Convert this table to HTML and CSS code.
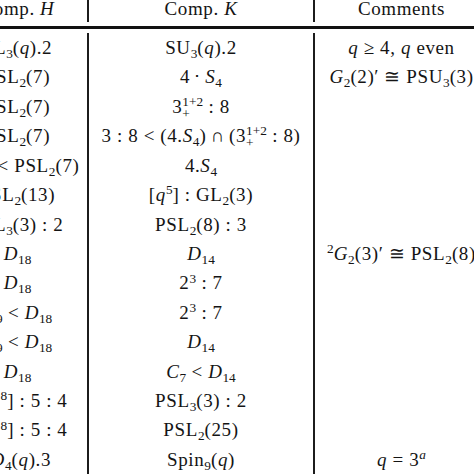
FILE: index.html
```html
<!DOCTYPE html>
<html>
<head>
<meta charset="utf-8">
<link rel="stylesheet" href="styles.css">
</head>
<body>
<div class="table">
  <div class="row head">
    <div class="cell">Comp. <span class="v">H</span></div>
    <div class="cell mid">Comp. <span class="v">K</span></div>
    <div class="cell">Comments</div>
  </div>
  <div class="rule"></div>
  <div class="body">
    <div class="row">
      <div class="cell">SL<span class="sb">3</span>(<span class="v">q</span>).2</div>
      <div class="cell mid">SU<span class="sb">3</span>(<span class="v">q</span>).2</div>
      <div class="cell"><span class="v">q</span><span class="rel">≥</span>4, <span class="v">q</span> even</div>
    </div>
    <div class="row">
      <div class="cell">PSL<span class="sb">2</span>(7)</div>
      <div class="cell mid">4<span class="bin">⋅</span><span class="v">S</span><span class="sb">4</span></div>
      <div class="cell"><span class="v">G</span><span class="sb">2</span>(2)′<span class="rel">≅</span>PSU<span class="sb">3</span>(3)</div>
    </div>
    <div class="row">
      <div class="cell">PSL<span class="sb">2</span>(7)</div>
      <div class="cell mid">3<span class="ss"><span class="ln">1+2</span><span class="ln">+</span></span><span class="rel">:</span>8</div>
      <div class="cell"></div>
    </div>
    <div class="row">
      <div class="cell">PSL<span class="sb">2</span>(7)</div>
      <div class="cell mid">3<span class="rel">:</span>8<span class="rel">&lt;</span>(4.<span class="v">S</span><span class="sb">4</span>)<span class="bin">∩</span>(3<span class="ss"><span class="ln">1+2</span><span class="ln">+</span></span><span class="rel">:</span>8)</div>
      <div class="cell"></div>
    </div>
    <div class="row">
      <div class="cell">7<span class="rel">:</span>3<span class="rel">&lt;</span>PSL<span class="sb">2</span>(7)</div>
      <div class="cell mid">4.<span class="v">S</span><span class="sb">4</span></div>
      <div class="cell"></div>
    </div>
    <div class="row">
      <div class="cell">PSL<span class="sb">2</span>(13)</div>
      <div class="cell mid">[<span class="v">q</span><span class="sp">5</span>]<span class="rel">:</span>GL<span class="sb">2</span>(3)</div>
      <div class="cell"></div>
    </div>
    <div class="row">
      <div class="cell">PSL<span class="sb">3</span>(3)<span class="rel">:</span>2</div>
      <div class="cell mid">PSL<span class="sb">2</span>(8)<span class="rel">:</span>3</div>
      <div class="cell"></div>
    </div>
    <div class="row">
      <div class="cell"><span class="v">D</span><span class="sb">18</span></div>
      <div class="cell mid"><span class="v">D</span><span class="sb">14</span></div>
      <div class="cell"><span class="sp">2</span><span class="v">G</span><span class="sb">2</span>(3)′<span class="rel">≅</span>PSL<span class="sb">2</span>(8)</div>
    </div>
    <div class="row">
      <div class="cell"><span class="v">D</span><span class="sb">18</span></div>
      <div class="cell mid">2<span class="sp">3</span><span class="rel">:</span>7</div>
      <div class="cell"></div>
    </div>
    <div class="row">
      <div class="cell"><span class="v">C</span><span class="sb">9</span><span class="rel">&lt;</span><span class="v">D</span><span class="sb">18</span></div>
      <div class="cell mid">2<span class="sp">3</span><span class="rel">:</span>7</div>
      <div class="cell"></div>
    </div>
    <div class="row">
      <div class="cell"><span class="v">C</span><span class="sb">9</span><span class="rel">&lt;</span><span class="v">D</span><span class="sb">18</span></div>
      <div class="cell mid"><span class="v">D</span><span class="sb">14</span></div>
      <div class="cell"></div>
    </div>
    <div class="row">
      <div class="cell"><span class="v">D</span><span class="sb">18</span></div>
      <div class="cell mid"><span class="v">C</span><span class="sb">7</span><span class="rel">&lt;</span><span class="v">D</span><span class="sb">14</span></div>
      <div class="cell"></div>
    </div>
    <div class="row">
      <div class="cell"><span class="wide">[5<span class="sp">8</span>]<span class="rel">:</span>5<span class="rel">:</span>4</span></div>
      <div class="cell mid">PSL<span class="sb">3</span>(3)<span class="rel">:</span>2</div>
      <div class="cell"></div>
    </div>
    <div class="row">
      <div class="cell"><span class="wide">[5<span class="sp">8</span>]<span class="rel">:</span>5<span class="rel">:</span>4</span></div>
      <div class="cell mid">PSL<span class="sb">2</span>(25)</div>
      <div class="cell"></div>
    </div>
    <div class="row">
      <div class="cell"><span class="sp">3</span><span class="v">D</span><span class="sb">4</span>(<span class="v">q</span>).3</div>
      <div class="cell mid">Spin<span class="sb">9</span>(<span class="v">q</span>)</div>
      <div class="cell"><span class="v">q</span><span class="rel">=</span>3<span class="sp"><span class="v">a</span></span></div>
    </div>
  </div>
</div>
</body>
</html>
```

FILE: styles.css
```css
html, body {
  margin: 0;
  padding: 0;
  background: #ffffff;
}
body {
  width: 474px;
  height: 474px;
  overflow: hidden;
  font-family: "Liberation Serif", "Times New Roman", serif;
  font-size: 19px;
  letter-spacing: 0.6px;
  color: #141414;
}
.table {
  margin-left: -52px;
  width: 540px;
}
.row {
  display: grid;
  grid-template-columns: 139px 228px 173px;
}
.cell {
  display: block;
  text-align: center;
  white-space: nowrap;
  box-sizing: border-box;
  height: 29.43px;
  line-height: 29.43px;
}
.head .cell {
  height: 22px;
  line-height: 18px;
}
.mid {
  border-left: 2px solid #1c1c1c;
  border-right: 2px solid #1c1c1c;
}
.rule {
  height: 3px;
  margin: 4px 0 4px;
  background: #111;
}
.v {
  font-style: italic;
}
.sb {
  font-size: 0.7em;
  position: relative;
  top: 0.3em;
  letter-spacing: 0;
}
.sp {
  font-size: 0.7em;
  position: relative;
  top: -0.5em;
  letter-spacing: 0;
}
.ss {
  display: inline-block;
  vertical-align: -0.37em;
  font-size: 0.7em;
  line-height: 0.9em;
  letter-spacing: 0;
  text-align: left;
}
.ln {
  display: block;
}
.wide {
  margin-left: 16px;
}
.rel {
  margin: 0 0.28em;
}
.bin {
  margin: 0 0.22em;
}
```
